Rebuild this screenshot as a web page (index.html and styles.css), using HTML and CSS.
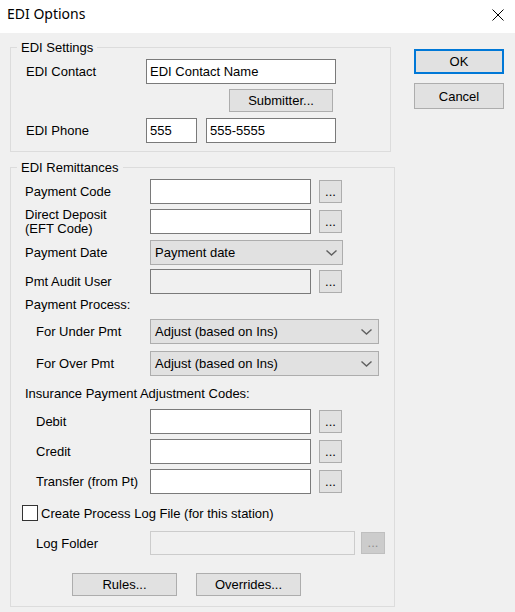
FILE: index.html
```html
<!DOCTYPE html>
<html>
<head>
<meta charset="utf-8">
<link rel="stylesheet" href="styles.css">
</head>
<body>
<div class="window">
  <div class="titlebar">
    <span class="title">EDI Options</span>
    <svg class="close" width="12" height="12" viewBox="0 0 12 12"><path d="M0.5 0.5 L11.5 11.5 M11.5 0.5 L0.5 11.5" stroke="#000" stroke-width="1" fill="none"/></svg>
  </div>
  <div class="content">
    <div class="main">
      <div class="group settings">
        <div class="legend">EDI Settings</div>
        <div class="row r-contact">
          <span class="lbl">EDI Contact</span>
          <div class="field w-contact">EDI Contact Name</div>
        </div>
        <div class="row r-submit">
          <div class="btn submitter">Submitter...</div>
        </div>
        <div class="row r-phone">
          <span class="lbl">EDI Phone</span>
          <div class="field w-area">555</div>
          <div class="field w-num">555-5555</div>
        </div>
      </div>

      <div class="group remit">
        <div class="legend">EDI Remittances</div>
        <div class="row r1">
          <span class="lbl">Payment Code</span>
          <div class="field w-std"></div>
          <div class="btn dots">...</div>
        </div>
        <div class="row r2">
          <span class="lbl two">Direct Deposit<br>(EFT Code)</span>
          <div class="field w-std"></div>
          <div class="btn dots">...</div>
        </div>
        <div class="row r3">
          <span class="lbl">Payment Date</span>
          <div class="combo w-date"><span>Payment date</span><svg class="chev" width="11" height="6" viewBox="0 0 11 6"><path d="M0.5 0.5 L5.5 5 L10.5 0.5" stroke="#606060" stroke-width="1.4" fill="none"/></svg></div>
        </div>
        <div class="row r4">
          <span class="lbl">Pmt Audit User</span>
          <div class="field w-std readonly"></div>
          <div class="btn dots">...</div>
        </div>
        <div class="row text r5">
          <span class="lbl">Payment Process:</span>
        </div>
        <div class="row r6">
          <span class="lbl sub">For Under Pmt</span>
          <div class="combo w-wide"><span>Adjust (based on Ins)</span><svg class="chev" width="11" height="6" viewBox="0 0 11 6"><path d="M0.5 0.5 L5.5 5 L10.5 0.5" stroke="#606060" stroke-width="1.4" fill="none"/></svg></div>
        </div>
        <div class="row r7">
          <span class="lbl sub">For Over Pmt</span>
          <div class="combo w-wide"><span>Adjust (based on Ins)</span><svg class="chev" width="11" height="6" viewBox="0 0 11 6"><path d="M0.5 0.5 L5.5 5 L10.5 0.5" stroke="#606060" stroke-width="1.4" fill="none"/></svg></div>
        </div>
        <div class="row text r8">
          <span class="lbl">Insurance Payment Adjustment Codes:</span>
        </div>
        <div class="row r9">
          <span class="lbl sub">Debit</span>
          <div class="field w-std"></div>
          <div class="btn dots">...</div>
        </div>
        <div class="row r10">
          <span class="lbl sub">Credit</span>
          <div class="field w-std"></div>
          <div class="btn dots">...</div>
        </div>
        <div class="row r11">
          <span class="lbl sub">Transfer (from Pt)</span>
          <div class="field w-std"></div>
          <div class="btn dots">...</div>
        </div>
        <div class="row check r12">
          <span class="box"></span>
          <span class="check-lbl">Create Process Log File (for this station)</span>
        </div>
        <div class="row r13">
          <span class="lbl sub">Log Folder</span>
          <div class="field w-log disabled"></div>
          <div class="btn dots dis">...</div>
        </div>
        <div class="row r14">
          <div class="btn wide">Rules...</div>
          <div class="btn wide">Overrides...</div>
        </div>
      </div>
    </div>
    <div class="side">
      <div class="btn ok">OK</div>
      <div class="btn cancel">Cancel</div>
    </div>
  </div>
</div>
</body>
</html>
```

FILE: styles.css
```css
* { box-sizing: border-box; }
html, body { margin: 0; padding: 0; }
body {
  width: 515px;
  height: 612px;
  background: #f0f0f0;
  font-family: "Liberation Sans", Arial, sans-serif;
  font-size: 13px;
  color: #000;
  overflow: hidden;
}
.window { width: 515px; height: 612px; }

.titlebar {
  height: 33px;
  background: #fff;
  display: flex;
  align-items: center;
  justify-content: space-between;
  padding: 0 11px 0 7px;
}
.title {
  font-family: "Noto Sans", "Open Sans", sans-serif;
  font-size: 14px;
  line-height: 18px;
  margin-top: -5px;
}
.close { display: block; margin-top: -4px; }

.content {
  display: flex;
  align-items: flex-start;
  padding-left: 10px;
}
.main { width: 385px; }
.side {
  margin-left: 19px;
  margin-top: 16px;
  display: flex;
  flex-direction: column;
}

.group {
  border: 1px solid #dcdcdc;
}
.settings {
  width: 381px;
  margin-top: 14px;
  padding-bottom: 8px;
}
.remit {
  width: 385px;
  margin-top: 15px;
  padding-bottom: 10px;
}
.legend {
  margin: -8px 0 0 6px;
  padding: 0 4px;
  background: #f0f0f0;
  width: fit-content;
  line-height: 15px;
  height: 15px;
}

.row {
  display: flex;
  align-items: center;
  height: 25px;
}
.lbl {
  flex: none;
  width: 139px;
  padding-left: 14px;
  line-height: 15px;
  white-space: nowrap;
}
.lbl.sub { padding-left: 25px; }
.lbl.two { line-height: 14px; }
.row.text { height: 15px; }

.settings .lbl { width: 135px; padding-left: 15px; }
.r-contact { margin-top: 4px; }
.r-submit { margin-top: 5px; height: 23px; }
.r-phone { margin-top: 6px; }

.field {
  height: 25px;
  border: 1px solid #7a7a7a;
  background: #fff;
  padding-left: 3px;
  line-height: 23px;
  white-space: nowrap;
  flex: none;
}
.field.readonly { background: #f0f0f0; }
.field.disabled { background: #f0f0f0; border-color: #cccccc; height: 24px; }
.w-contact { width: 190px; }
.w-area { width: 51px; }
.w-num { width: 130px; margin-left: 9px; }
.w-std { width: 161px; }
.w-log { width: 205px; }

.btn {
  background: #e1e1e1;
  border: 1px solid #adadad;
  text-align: center;
  line-height: 15px;
  display: flex;
  align-items: center;
  justify-content: center;
  flex: none;
}
.submitter { width: 104px; height: 23px; margin-left: 218px; }
.dots {
  width: 23px;
  height: 23px;
  margin-left: 8px;
  align-items: flex-start;
  padding-top: 3px;
}
.dots.dis {
  width: 24px;
  height: 22px;
  margin-left: 6px;
  background: #cccccc;
  border-color: #bfbfbf;
  color: #8d8d8d;
  padding-top: 2px;
}
.wide { width: 105px; height: 23px; }
.wide + .wide { margin-left: 19px; }
.r14 .wide:first-child { margin-left: 61px; }

.combo {
  height: 25px;
  background: #e1e1e1;
  border: 1px solid #adadad;
  display: flex;
  align-items: center;
  justify-content: space-between;
  padding: 0 5px 0 4px;
  flex: none;
}
.w-date { width: 193px; }
.w-wide { width: 229px; padding-right: 6px; }
.chev { display: block; }

.ok {
  width: 90px;
  height: 25px;
  border: 2px solid #0078d7;
}
.cancel {
  width: 90px;
  height: 26px;
  margin-top: 9px;
}

.r1 { margin-top: 4px; }
.r2 { margin-top: 5px; }
.r3 { margin-top: 6px; }
.r4 { margin-top: 4px; }
.r5 { margin-top: 3px; }
.r6 { margin-top: 7px; }
.r7 { margin-top: 7px; }
.r8 { margin-top: 10px; }
.r9 { margin-top: 8px; }
.r10 { margin-top: 5px; }
.r11 { margin-top: 5px; }
.r12 { margin-top: 11px; height: 16px; padding-left: 11px; }
.r13 { margin-top: 10px; height: 24px; }
.r14 { margin-top: 18px; height: 23px; }

.box {
  width: 16px;
  height: 16px;
  border: 1px solid #333;
  background: #fff;
  flex: none;
}
.check-lbl { margin-left: 3px; line-height: 15px; white-space: nowrap; }
```
